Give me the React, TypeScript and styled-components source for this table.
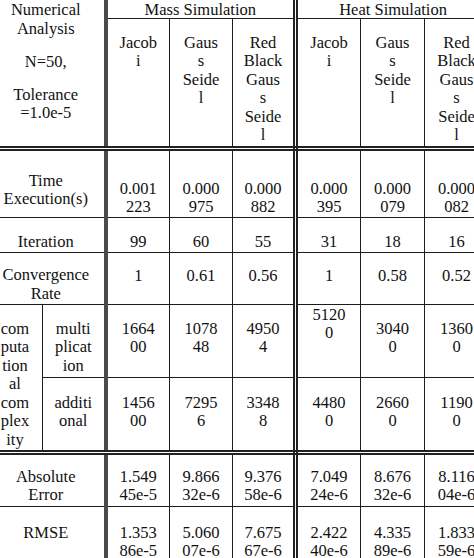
import React from 'react';
import styled, { createGlobalStyle } from 'styled-components';

type Edge = 'thin' | 'thick' | 'double' | 'none';

const GlobalStyle = createGlobalStyle`
  html, body {
    margin: 0;
    padding: 0;
    background: #ffffff;
  }
  body {
    width: 474px;
    height: 558px;
    overflow: hidden;
  }
`;

const edge = (e: Edge = 'thin') => {
  if (e === 'thick') return '4px solid #4a4a4a';
  if (e === 'double') return '5px double #222222';
  if (e === 'none') return 'none';
  return '1.5px solid #1c1c1c';
};

const Sheet = styled.table`
  margin-left: -13px;
  width: 501px;
  border-collapse: collapse;
  table-layout: fixed;
  font-family: 'Liberation Serif', 'Times New Roman', serif;
  font-size: 16.5px;
  line-height: 18.6px;
  color: #111111;
`;

const Col = styled.col<{ $w: number }>`
  width: ${({ $w }) => $w}px;
`;

const Row = styled.tr<{ $h: number }>`
  height: ${({ $h }) => $h}px;
`;

const Cell = styled.td<{ $pad?: number; $right?: Edge; $bottom?: Edge; $top?: Edge; $lh?: number }>`
  padding: ${({ $pad }) => $pad ?? 15}px 0 0 0;
  vertical-align: top;
  text-align: center;
  white-space: nowrap;
  overflow: hidden;
  border-left: ${edge('thin')};
  border-top: ${({ $top }) => edge($top)};
  border-right: ${({ $right }) => edge($right)};
  border-bottom: ${({ $bottom }) => edge($bottom)};
  ${({ $lh }) => ($lh ? `line-height: ${$lh}px;` : '')}
`;

const Paragraph = styled.div<{ $gap?: number }>`
  margin-top: ${({ $gap }) => $gap ?? 0}px;
`;

const Lines = ({ lines }: { lines: string[] }) => (
  <>
    {lines.map((l, i) => (
      <React.Fragment key={i}>
        {i > 0 && <br />}
        {l}
      </React.Fragment>
    ))}
  </>
);

const methods: string[][] = [
  ['Jacob', 'i'],
  ['Gaus', 's', 'Seide', 'l'],
  ['Red', 'Black', 'Gaus', 's', 'Seide', 'l'],
];

interface Metric {
  label: string[];
  h: number;
  labelPad: number;
  pad: number;
  values: string[][];
  bottom?: Edge;
}

const topMetrics: Metric[] = [
  {
    label: ['Time', 'Execution(s)'],
    h: 69,
    labelPad: 21,
    pad: 29,
    values: [
      ['0.001', '223'],
      ['0.000', '975'],
      ['0.000', '882'],
      ['0.000', '395'],
      ['0.000', '079'],
      ['0.000', '082'],
    ],
  },
  {
    label: ['Iteration'],
    h: 35,
    labelPad: 15,
    pad: 15,
    values: [['99'], ['60'], ['55'], ['31'], ['18'], ['16']],
  },
  {
    label: ['Convergence', 'Rate'],
    h: 52,
    labelPad: 13.5,
    pad: 14,
    values: [['1'], ['0.61'], ['0.56'], ['1'], ['0.58'], ['0.52']],
  },
];

const bottomMetrics: Metric[] = [
  {
    label: ['Absolute', 'Error'],
    h: 54,
    labelPad: 13,
    pad: 13,
    values: [
      ['1.549', '45e-5'],
      ['9.866', '32e-6'],
      ['9.376', '58e-6'],
      ['7.049', '24e-6'],
      ['8.676', '32e-6'],
      ['8.116', '04e-6'],
    ],
  },
  {
    label: ['RMSE'],
    h: 60,
    labelPad: 17,
    pad: 17,
    values: [
      ['1.353', '86e-5'],
      ['5.060', '07e-6'],
      ['7.675', '67e-6'],
      ['2.422', '40e-6'],
      ['4.335', '89e-6'],
      ['1.833', '59e-6'],
    ],
  },
];

const multiplication = [
  ['1664', '00'],
  ['1078', '48'],
  ['4950', '4'],
  ['5120', '0'],
  ['3040', '0'],
  ['1360', '0'],
];
const multiplicationPads = [15, 15, 15, 1, 15, 15];

const additional = [
  ['1456', '00'],
  ['7295', '6'],
  ['3348', '8'],
  ['4480', '0'],
  ['2660', '0'],
  ['1190', '0'],
];

// the mass / heat split sits after the third value column
const splitAfter = (i: number): Edge => (i === 2 ? 'double' : 'thin');

const MetricRow = ({ m }: { m: Metric }) => (
  <Row $h={m.h}>
    <Cell colSpan={2} $pad={m.labelPad} $right="thick" $bottom={m.bottom}>
      <Lines lines={m.label} />
    </Cell>
    {m.values.map((v, i) => (
      <Cell key={i} $pad={m.pad} $right={splitAfter(i)} $bottom={m.bottom}>
        <Lines lines={v} />
      </Cell>
    ))}
  </Row>
);

export default function App() {
  return (
    <>
      <GlobalStyle />
      <Sheet>
        <colgroup>
          {[55, 63, 64, 63, 63, 65, 64, 64].map((w, i) => (
            <Col key={i} $w={w} />
          ))}
        </colgroup>
        <tbody>
          <Row $h={18}>
            <Cell rowSpan={2} colSpan={2} $pad={1} $top="none" $right="thick" $bottom="double">
              <Paragraph>
                <Lines lines={['Numerical', 'Analysis']} />
              </Paragraph>
              <Paragraph $gap={15}>N=50,</Paragraph>
              <Paragraph $gap={14}>
                <Lines lines={['Tolerance', '=1.0e-5']} />
              </Paragraph>
            </Cell>
            <Cell colSpan={3} $pad={1.5} $lh={16} $top="none" $right="double">
              Mass Simulation
            </Cell>
            <Cell colSpan={3} $pad={1.5} $lh={16} $top="none">
              Heat Simulation
            </Cell>
          </Row>
          <Row $h={130}>
            {[...methods, ...methods].map((m, i) => (
              <Cell key={i} $pad={15} $right={splitAfter(i)} $bottom="double">
                <Lines lines={m} />
              </Cell>
            ))}
          </Row>
          {topMetrics.map((m, i) => (
            <MetricRow key={i} m={m} />
          ))}
          <Row $h={73}>
            <Cell rowSpan={2} $pad={15} $lh={18.5} $bottom="double">
              <Lines lines={['com', 'puta', 'tion', 'al', 'com', 'plex', 'ity']} />
            </Cell>
            <Cell $pad={15} $right="thick">
              <Lines lines={['multi', 'plicat', 'ion']} />
            </Cell>
            {multiplication.map((v, i) => (
              <Cell key={i} $pad={multiplicationPads[i]} $right={splitAfter(i)}>
                <Lines lines={v} />
              </Cell>
            ))}
          </Row>
          <Row $h={75}>
            <Cell $pad={16} $right="thick" $bottom="double">
              <Lines lines={['additi', 'onal']} />
            </Cell>
            {additional.map((v, i) => (
              <Cell key={i} $pad={16} $right={splitAfter(i)} $bottom="double">
                <Lines lines={v} />
              </Cell>
            ))}
          </Row>
          {bottomMetrics.map((m, i) => (
            <MetricRow key={i} m={m} />
          ))}
        </tbody>
      </Sheet>
    </>
  );
}
